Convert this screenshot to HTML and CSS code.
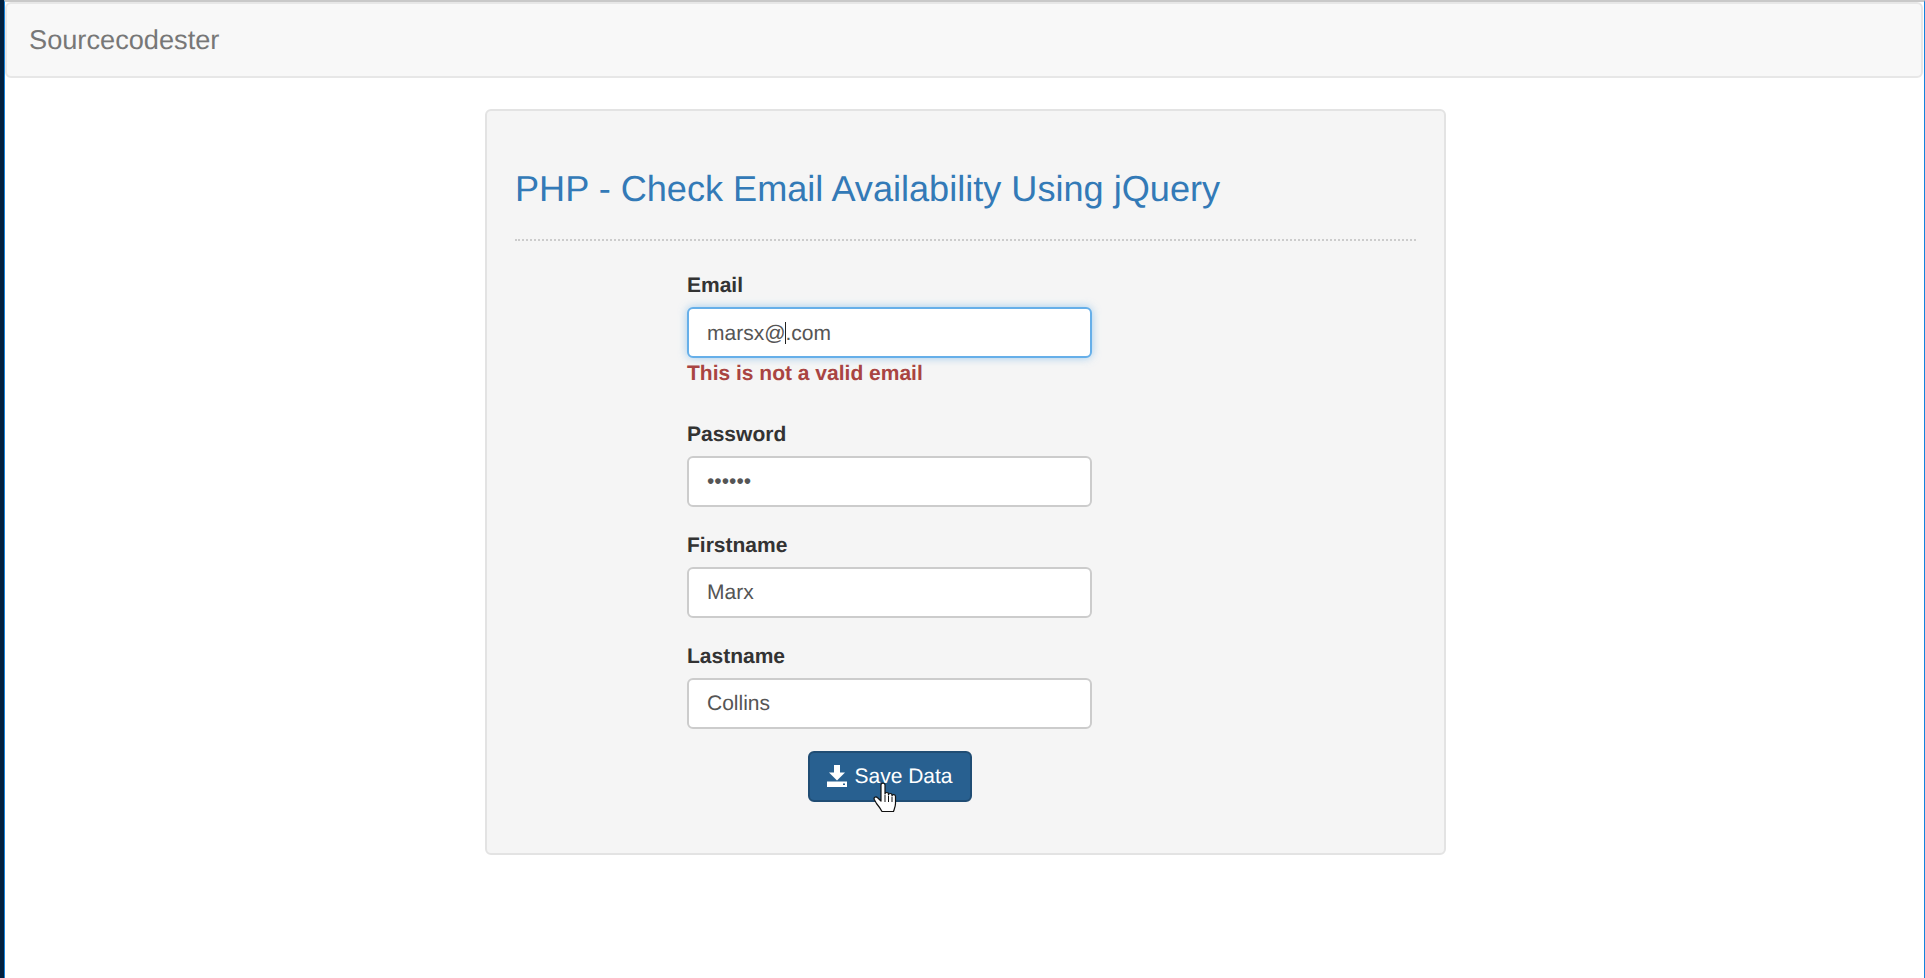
FILE: index.html
```html
<!DOCTYPE html>
<html lang="en">
<head>
    <meta charset="UTF-8">
    <meta name="viewport" content="width=device-width, initial-scale=1.0">
    <title>PHP - Check Email Availability Using jQuery</title>
    <link rel="stylesheet" href="styles.css">
</head>
<body>
    <div class="page">
        <nav class="navbar">
            <a class="brand" href="#">Sourcecodester</a>
        </nav>

        <main class="well">
            <h3 class="title">PHP - Check Email Availability Using jQuery</h3>
            <hr class="divider">
            <form class="signup">
                <div class="form-group first">
                    <label for="email">Email</label>
                    <div class="input-wrap">
                        <input class="form-control focused" type="text" id="email" value="marsx@.com">
                        <span class="caret"></span>
                    </div>
                    <div class="error">This is not a valid email</div>
                </div>
                <div class="form-group">
                    <label for="password">Password</label>
                    <input class="form-control" type="password" id="password" value="123456">
                </div>
                <div class="form-group">
                    <label for="firstname">Firstname</label>
                    <input class="form-control" type="text" id="firstname" value="Marx">
                </div>
                <div class="form-group last">
                    <label for="lastname">Lastname</label>
                    <input class="form-control" type="text" id="lastname" value="Collins">
                </div>
                <div class="actions">
                    <button class="btn" type="button">
                        <svg class="btn-icon" viewBox="0 0 20 22" width="20" height="22">
                            <path fill="#fff" d="M7 0h6v7.500h5L10 15.500 2 7.500h5z"/>
                            <path fill="#fff" d="M0 16.500h20V22H0z"/>
                            <rect fill="#286090" x="16" y="18.500" width="2" height="1.500"/>
                        </svg>
                        <span class="btn-label">Save Data</span>
                        <svg class="pointer" viewBox="0 0 26 33" width="26" height="33">
                            <path fill="#fff" stroke="#111" stroke-width="1.200" stroke-linejoin="round" d="M8 3c0-2.600 4-2.600 4 0v9c0-2 3.500-2 3.500 0v1c0-2 3.500-2 3.500 0v1c0-1.800 3.500-1.800 3.500.5v7c0 3-1 5-2 8H9c-1.500-3-3-5-5.500-8L1.300 17.500c-1-2 1.500-3.500 3-2L8 19z"/>
                            <path fill="none" stroke="#111" d="M12 13v7M15.500 14v6M19 15v5"/>
                        </svg>
                    </button>
                </div>
            </form>
        </main>
    </div>
</body>
</html>
```

FILE: styles.css
```css
/* Umum */
* {
    box-sizing: border-box;
}

html, body {
    height: 100%;
}

body {
    margin: 0;
    background-color: #fff;
    border-left: 4px solid #02203f;
    font-family: "Liberation Sans", Arial, sans-serif;
    font-size: 21px;
    line-height: 30px;
    color: #333;
    text-rendering: geometricPrecision;
    overflow: hidden;
}

.page {
    min-height: 100%;
    border-left: 1px solid #1583dc;
    border-right: 1px solid #1583dc;
    border-top: 2px solid #c9c9c9;
    padding-right: 1px;
}

/* Navbar */
.navbar {
    height: 76px;
    background-color: #f8f8f8;
    border: 2px solid #e7e7e7;
    border-radius: 6px;
    display: flex;
    align-items: center;
    padding-left: 22px;
}

.brand {
    font-size: 27.200px;
    color: #777;
    text-decoration: none;
}

/* Kotak form */
.well {
    width: 961px;
    margin: 31px 0 0 480px;
    padding: 28px;
    background-color: #f5f5f5;
    border: 2px solid #e3e3e3;
    border-radius: 6px;
}

.title {
    margin: 30px 0 0;
    font-size: 36.120px;
    font-weight: 500;
    line-height: 39.600px;
    color: #337ab7;
}

.divider {
    margin: 30px 0 29px;
    border: 0;
    border-top: 2px dotted #ccc;
}

.signup {
    width: 405px;
    margin-left: 172px;
}

.form-group {
    margin-bottom: 22.500px;
}

.form-group.first {
    margin-bottom: 30.500px;
}

.form-group.last {
    margin-bottom: 21.500px;
}

label {
    display: block;
    margin-bottom: 7.500px;
    padding-top: 1px;
    font-weight: bold;
    line-height: 29px;
}

.input-wrap {
    position: relative;
}

.form-control {
    display: block;
    width: 100%;
    height: 51px;
    padding: 0 18px;
    background-color: #fff;
    border: 2px solid #ccc;
    border-radius: 6px;
    font-family: inherit;
    font-size: 21px;
    text-rendering: geometricPrecision;
    color: #555;
    outline: none;
}

.form-control.focused {
    padding-top: 2px;
    border-color: #66afe9;
    box-shadow: 0 0 8px rgba(102, 175, 233, .6);
}

.caret {
    position: absolute;
    left: 98px;
    top: 15px;
    width: 1px;
    height: 22px;
    background-color: #222;
}

.error {
    padding-top: 1px;
    font-weight: bold;
    line-height: 29px;
    color: #a94442;
}

.actions {
    display: flex;
    justify-content: center;
    margin-bottom: 23.500px;
}

.btn {
    position: relative;
    display: flex;
    align-items: center;
    gap: 7px;
    height: 51px;
    margin-left: 1px;
    padding: 0 17.500px;
    background-color: #286090;
    border: 2px solid #204d74;
    border-radius: 6px;
    color: #fff;
    font-family: inherit;
    font-size: 21px;
    text-rendering: geometricPrecision;
}

.btn-icon {
    flex: none;
}

.btn-label {
    padding-top: 2px;
}

.pointer {
    position: absolute;
    left: 63px;
    top: 29px;
}
```
